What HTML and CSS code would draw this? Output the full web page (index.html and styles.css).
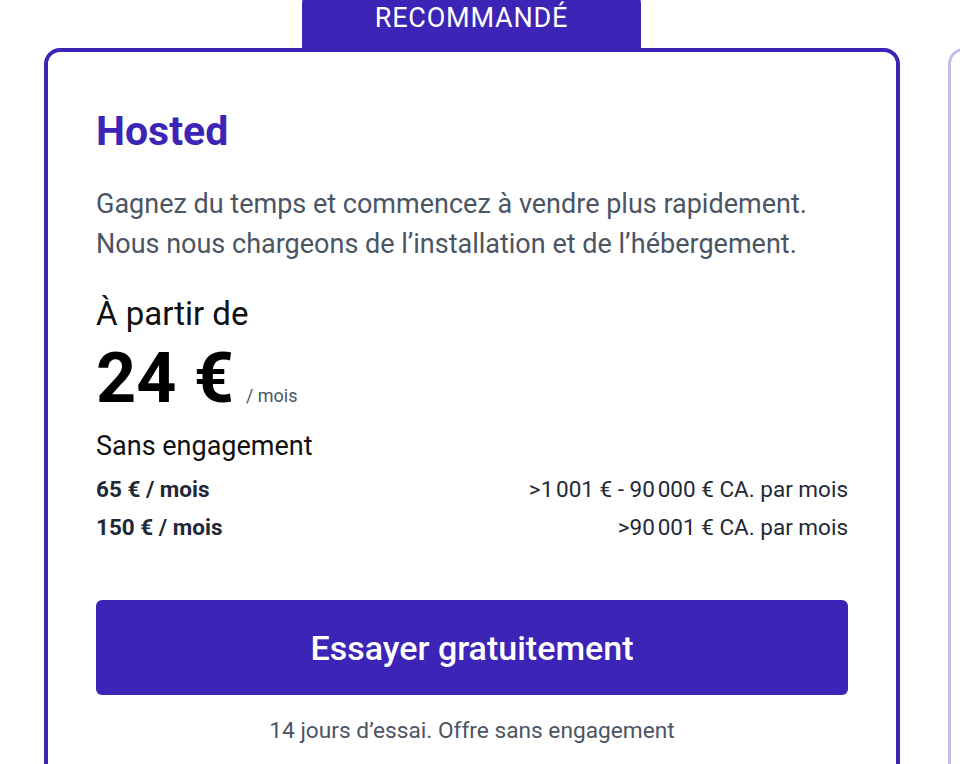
FILE: index.html
```html
<!DOCTYPE html>
<html lang="fr">
<head>
<meta charset="utf-8">
<link rel="stylesheet" href="styles.css">
</head>
<body>
<div class="plans">
  <div class="card card--featured">
    <div class="badge">RECOMMANDÉ</div>
    <h2 class="title">Hosted</h2>
    <p class="desc">Gagnez du temps et commencez à vendre plus rapidement. Nous nous chargeons de l’installation et de l’hébergement.</p>
    <div class="from">À partir de</div>
    <div class="price"><span class="amount">24 €</span><span class="per">/ mois</span></div>
    <div class="commit">Sans engagement</div>
    <div class="tier tier--first"><span class="tier-price">65 € / mois</span><span class="tier-range">&gt;1&#8239;001 € - 90&#8239;000 € CA. par mois</span></div>
    <div class="tier"><span class="tier-price">150 € / mois</span><span class="tier-range">&gt;90&#8239;001 € CA. par mois</span></div>
    <a class="cta" href="#">Essayer gratuitement</a>
    <div class="note">14 jours d’essai. Offre sans engagement</div>
  </div>
  <div class="card card--other"></div>
</div>
</body>
</html>
```

FILE: styles.css
```css
html, body {
  margin: 0;
  padding: 0;
  background: #ffffff;
  font-family: Roboto, "Noto Sans", sans-serif;
  overflow: hidden;
}

.plans {
  display: flex;
  gap: 48px;
  padding: 48px 0 0 44px;
  width: 1400px;
}

.card {
  position: relative;
  box-sizing: border-box;
  border-radius: 16px;
  background: #fff;
  height: 900px;
  flex-shrink: 0;
}

.card--featured {
  width: 856px;
  border: 4px solid #3c24b7;
  padding: 53px 48px 0 48px;
}

.card--other {
  width: 400px;
  border: 3px solid #c4bdea;
}

.badge {
  position: absolute;
  left: 254px;
  top: -64px;
  width: 339px;
  height: 64px;
  box-sizing: border-box;
  padding-top: 15px;
  background: #3c24b7;
  border-radius: 16px 16px 0 0;
  color: #fff;
  text-align: center;
  font-size: 27px;
  line-height: 30px;
  font-weight: 400;
  letter-spacing: 0.8px;
}

.title {
  margin: 0;
  font-size: 41px;
  line-height: 52px;
  font-weight: 700;
  color: #3c24b7;
}

.desc {
  margin: 27px 0 0;
  font-size: 27px;
  line-height: 40px;
  color: #4b5563;
}

.from {
  margin-top: 30px;
  font-size: 33px;
  line-height: 40px;
  color: #111;
}

.price {
  display: flex;
  align-items: baseline;
  margin-top: 4px;
  height: 80px;
}

.amount {
  font-size: 70px;
  line-height: 80px;
  font-weight: 700;
  color: #000;
}

.per {
  margin-left: 12px;
  font-size: 18px;
  color: #4b5563;
}

.commit {
  margin-top: 10px;
  font-size: 27px;
  line-height: 36px;
  color: #111;
}

.tier {
  display: flex;
  justify-content: space-between;
  align-items: baseline;
  font-size: 22.5px;
  line-height: 38px;
  color: #1f2937;
}

.tier--first {
  margin-top: 6px;
}

.tier-price {
  font-weight: 700;
}

.cta {
  display: flex;
  align-items: center;
  justify-content: center;
  margin-top: 54px;
  height: 95px;
  border-radius: 6px;
  background: #3c24b7;
  color: #fff;
  text-decoration: none;
  font-size: 34px;
  font-weight: 500;
}

.note {
  margin-top: 20px;
  text-align: center;
  font-size: 22.7px;
  line-height: 32px;
  color: #4b5563;
}
```
